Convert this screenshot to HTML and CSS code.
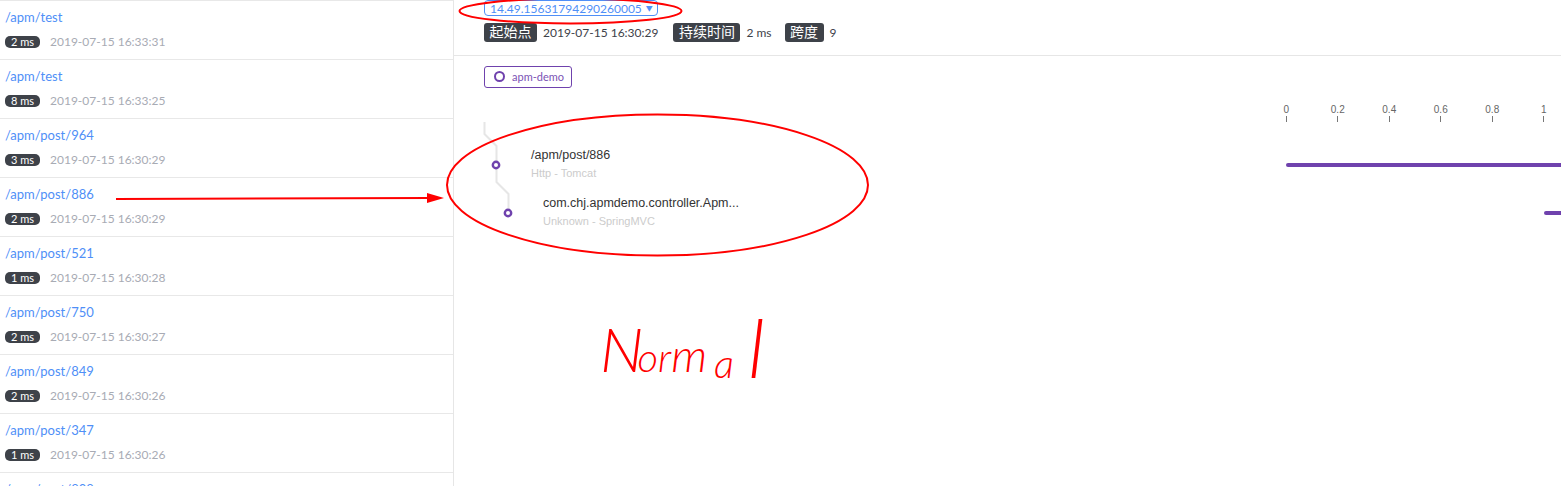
FILE: index.html
```html
<!DOCTYPE html>
<html lang="zh-CN">

<head>
  <meta charset="UTF-8">
  <title>APM Trace</title>
  <link rel="stylesheet" href="styles.css">
</head>

<body>
<div class="page">
  <!-- trace list -->
  <div class="trace-list">
    <div class="trace-item"><div class="trace-url">/apm/test</div><div class="trace-meta"><span class="ms">2 ms</span><span class="trace-date">2019-07-15 16:33:31</span></div></div>
    <div class="trace-item"><div class="trace-url">/apm/test</div><div class="trace-meta"><span class="ms">8 ms</span><span class="trace-date">2019-07-15 16:33:25</span></div></div>
    <div class="trace-item"><div class="trace-url">/apm/post/964</div><div class="trace-meta"><span class="ms">3 ms</span><span class="trace-date">2019-07-15 16:30:29</span></div></div>
    <div class="trace-item"><div class="trace-url">/apm/post/886</div><div class="trace-meta"><span class="ms">2 ms</span><span class="trace-date">2019-07-15 16:30:29</span></div></div>
    <div class="trace-item"><div class="trace-url">/apm/post/521</div><div class="trace-meta"><span class="ms">1 ms</span><span class="trace-date">2019-07-15 16:30:28</span></div></div>
    <div class="trace-item"><div class="trace-url">/apm/post/750</div><div class="trace-meta"><span class="ms">2 ms</span><span class="trace-date">2019-07-15 16:30:27</span></div></div>
    <div class="trace-item"><div class="trace-url">/apm/post/849</div><div class="trace-meta"><span class="ms">2 ms</span><span class="trace-date">2019-07-15 16:30:26</span></div></div>
    <div class="trace-item"><div class="trace-url">/apm/post/347</div><div class="trace-meta"><span class="ms">1 ms</span><span class="trace-date">2019-07-15 16:30:26</span></div></div>
    <div class="trace-item"><div class="trace-url">/apm/post/808</div></div>
  </div>

  <!-- trace detail -->
  <div class="detail">
    <div class="detail-head">
      <div class="trace-select">14.49.15631794290260005<span class="caret">▼</span></div>
      <div class="stats">
        <span class="stat-tag">起始点</span><span class="stat-val stat-first">2019-07-15 16:30:29</span>
        <span class="stat-tag">持续时间</span><span class="stat-val stat-second">2 ms</span>
        <span class="stat-tag">跨度</span><span class="stat-val">9</span>
      </div>
    </div>

    <div class="service-row">
      <div class="service-chip"><span class="service-dot"></span>apm-demo</div>
    </div>

    <div class="timeline">
      <div class="tree">
        <svg class="tree-lines" width="60" height="141" viewBox="0 0 60 141">
          <path d="M30.5 22V34L42.5 46V82L54.5 94V113" fill="none" stroke="#e6e6e6" stroke-width="2"/>
          <circle cx="42" cy="65" r="3.2" fill="#fff" stroke="#6f42ad" stroke-width="2.4"/>
          <circle cx="54" cy="113" r="3.2" fill="#fff" stroke="#6f42ad" stroke-width="2.4"/>
        </svg>
        <div class="span-row">
          <div class="span-label"><div class="span-name">/apm/post/886</div><div class="span-type">Http - Tomcat</div></div>
        </div>
        <div class="span-row span-child">
          <div class="span-label"><div class="span-name">com.chj.apmdemo.controller.Apm...</div><div class="span-type">Unknown - SpringMVC</div></div>
        </div>
      </div>
      <div class="chart">
        <div class="scale">
          <div class="tick">0</div>
          <div class="tick">0.2</div>
          <div class="tick">0.4</div>
          <div class="tick">0.6</div>
          <div class="tick">0.8</div>
          <div class="tick">1</div>
        </div>
        <div class="bar-row"><div class="bar"></div></div>
        <div class="bar-row"><div class="bar bar-late"></div></div>
      </div>
    </div>
  </div>
</div>

<!-- red marks drawn over the screenshot -->
<svg class="marks" width="1561" height="486" viewBox="0 0 1561 486">
  <ellipse cx="570.5" cy="11" rx="111" ry="12.5" fill="none" stroke="#f00" stroke-width="2"/>
  <ellipse cx="657.5" cy="185" rx="210.5" ry="70.5" fill="none" stroke="#f00" stroke-width="2"/>
  <path d="M116 199L430 198" fill="none" stroke="#f00" stroke-width="2"/>
  <path d="M427 193L444 198L427 203Z" fill="#f00"/>
</svg>
<div class="scrawl"><span class="big">N</span><span class="tight">o</span><span>r</span><span class="wide">m</span><span class="low">a</span><span class="tall">l</span></div>

</body>
</html>
```

FILE: styles.css
```css
body {
  margin: 0;
  padding: 0;
  font-family: "Lato", "Noto Sans CJK SC", sans-serif;
  background-color: #fff;
  overflow: hidden;
}

.page {
  display: flex;
  height: 486px;
  overflow: hidden;
}

.trace-list {
  width: 453px;
  flex-shrink: 0;
  border-right: 1px solid #e6e6e6;
}

.trace-item {
  height: 58px;
  border-top: 1px solid #e8e8e8;
  padding-left: 5px;
}

.trace-url {
  padding-top: 6px;
  font-size: 13px;
  line-height: 20px;
  color: #4f8ff7;
}

.trace-meta {
  display: flex;
  align-items: center;
  margin-top: 7px;
}

.ms {
  width: 35px;
  height: 12px;
  line-height: 12px;
  border-radius: 5px;
  background-color: #3e4249;
  color: #fff;
  font-size: 11px;
  text-align: center;
}

.trace-date {
  margin-left: 10px;
  font-size: 12px;
  line-height: 16px;
  color: #a8abb4;
}

.detail {
  flex: 1;
  min-width: 0;
}

.detail-head {
  height: 55px;
  padding-left: 30px;
  border-bottom: 1px solid #e6e6e6;
}

.trace-select {
  display: flex;
  align-items: center;
  width: 174px;
  height: 16px;
  box-sizing: border-box;
  padding-left: 5px;
  border: 1px solid #4f8ff7;
  border-radius: 4px;
  color: #4f8ff7;
  font-size: 12px;
}

.caret {
  font-size: 7px;
  margin-left: 4px;
}

.stats {
  display: flex;
  align-items: center;
  margin-top: 7px;
}

.stat-tag {
  height: 19px;
  line-height: 18px;
  padding: 0 5.5px;
  border-radius: 3px;
  background-color: #3e4249;
  color: #fff;
  font-size: 14px;
}

.stat-val {
  margin-left: 6px;
  font-size: 12px;
  color: #3e4249;
}

.stat-first {
  margin-right: 15px;
}

.stat-second {
  margin-right: 13px;
}

.service-row {
  padding: 10px 0 0 30px;
}

.service-chip {
  display: flex;
  align-items: center;
  width: 88px;
  height: 22px;
  box-sizing: border-box;
  padding: 0 0 1px 9px;
  border: 1px solid #6f42ad;
  border-radius: 3px;
  color: #7b52b5;
  font-size: 11px;
}

.service-dot {
  width: 7px;
  height: 7px;
  margin-right: 7px;
  border: 2px solid #6f42ad;
  border-radius: 50%;
}

.timeline {
  display: grid;
  grid-template-columns: 832px 1fr;
  margin-top: 12px;
}

.tree {
  position: relative;
  padding-top: 41px;
}

.tree-lines {
  position: absolute;
  left: 0;
  top: 0;
}

.span-row {
  height: 48px;
  padding-left: 77px;
  font-family: "Liberation Sans", sans-serif;
}

.span-child {
  padding-left: 89px;
}

.span-name {
  padding-top: 5px;
  font-size: 12.5px;
  line-height: 18px;
  color: #333;
}

.span-type {
  margin-top: 1px;
  font-size: 11px;
  line-height: 17px;
  color: #ccc;
}

.scale {
  display: flex;
  height: 41px;
  margin-left: -25.5px;
}

.tick {
  width: 51.5px;
  flex-shrink: 0;
  padding-top: 4px;
  text-align: center;
  font-family: "Liberation Sans", sans-serif;
  font-size: 10px;
  line-height: 12px;
  color: #666;
}

.tick::after {
  content: "";
  display: block;
  width: 1px;
  height: 6px;
  margin: 0 auto;
  background-color: #777;
}

.bar-row {
  display: flex;
  align-items: center;
  height: 48px;
}

.bar {
  flex: 1;
  height: 4px;
  border-radius: 2px 0 0 2px;
  background-color: #6f42ad;
}

.bar-late {
  margin-left: 258px;
}

/* anotacoes em vermelho por cima da tela */
.marks {
  position: absolute;
  left: 0;
  top: 0;
}

.scrawl {
  position: absolute;
  left: 600px;
  top: 296px;
  display: flex;
  align-items: baseline;
  color: #f00;
  font-family: "Lato", sans-serif;
  font-style: italic;
  font-weight: 300;
  font-size: 40px;
  line-height: 90px;
}

.scrawl .big {
  font-size: 62px;
  line-height: 90px;
}

.scrawl .tight {
  margin-left: -6px;
}

.scrawl .wide {
  font-size: 46px;
}

.scrawl .low {
  margin-left: 7px;
  transform: translateY(6px);
}

.scrawl .tall {
  margin-left: 14px;
  font-size: 80px;
  transform: translateY(6px);
}
```
